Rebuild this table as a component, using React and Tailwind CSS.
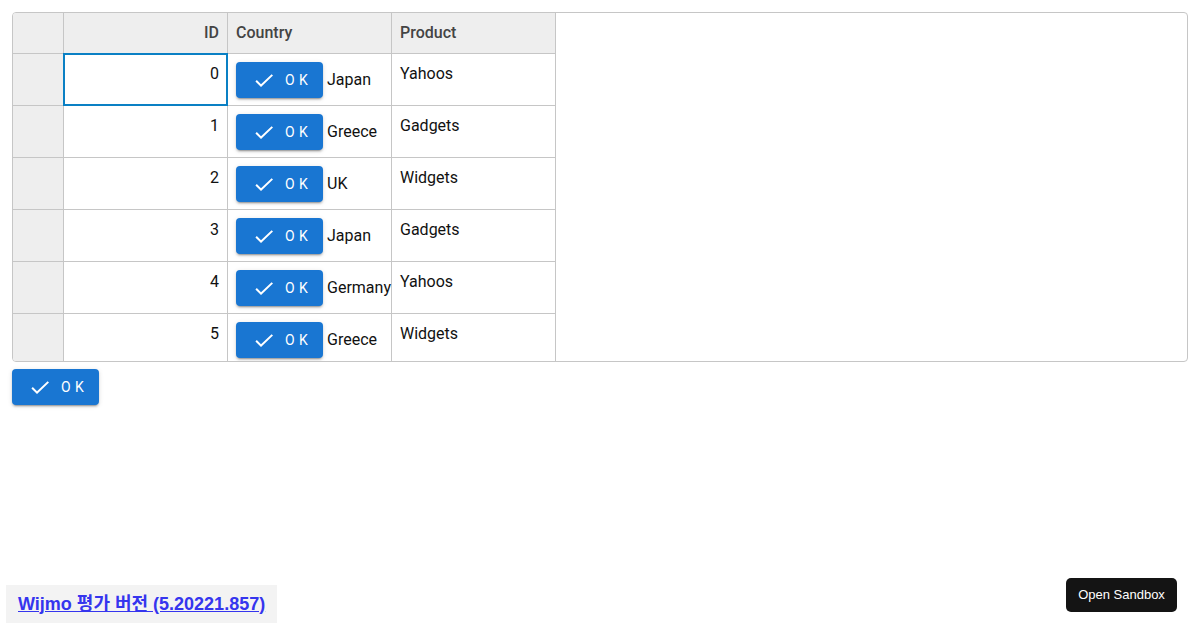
import React from "react";

const rows = [
  { id: 0, country: "Japan", product: "Yahoos" },
  { id: 1, country: "Greece", product: "Gadgets" },
  { id: 2, country: "UK", product: "Widgets" },
  { id: 3, country: "Japan", product: "Gadgets" },
  { id: 4, country: "Germany", product: "Yahoos" },
  { id: 5, country: "Greece", product: "Widgets" },
];

function OkButton() {
  return (
    <button className="flex h-[36px] w-[87px] shrink-0 items-center rounded-[4px] bg-[#1976d2] pl-[16px] text-white shadow-[0_3px_1px_-2px_rgba(0,0,0,0.2),0_2px_2px_0_rgba(0,0,0,0.14),0_1px_5px_0_rgba(0,0,0,0.12)]">
      <svg width="24" height="24" viewBox="0 0 24 24" fill="currentColor">
        <path d="M9 16.17 4.83 12l-1.42 1.41L9 19 21 7.59l-1.41-1.41z" />
      </svg>
      <span className="ml-[9px] text-[14px] font-normal tracking-[0.32em] leading-none">OK</span>
    </button>
  );
}

export default function App() {
  return (
    <div className="flex min-h-[630px] flex-col font-['Roboto',sans-serif]">
      {/* Grid */}
      <div className="mx-[12px] mt-[12px] h-[350px] w-[1176px] overflow-hidden rounded-[4px] border border-[#c6c6c6] text-[16px]">
        <div className="w-[543px]">
          <div className="flex h-[41px] border-b border-[#c6c6c6] bg-[#eeeeee] text-[#444] font-medium">
            <div className="w-[51px] border-r border-[#c6c6c6]" />
            <div className="flex w-[164px] items-center justify-end border-r border-[#c6c6c6] pr-[8px]">ID</div>
            <div className="flex w-[164px] items-center border-r border-[#c6c6c6] pl-[8px]">Country</div>
            <div className="flex w-[164px] items-center border-r border-[#c6c6c6] pl-[8px]">Product</div>
          </div>
          {rows.map((r, i) => (
            <div key={r.id} className="flex h-[52px] shrink-0 border-b border-[#c6c6c6] text-[#111]">
              <div className="w-[51px] border-r border-[#c6c6c6] bg-[#eeeeee]" />
              <div className="relative w-[164px] border-r border-[#c6c6c6] pr-[8px] pt-[8px] text-right">
                {r.id}
                {i === 0 && (
                  <div className="absolute -top-[1px] -left-[1px] -right-[1px] -bottom-[1px] border-2 border-[#0a80c4]" />
                )}
              </div>
              <div className="flex w-[164px] items-start border-r border-[#c6c6c6] pl-[8px] pt-[8px]">
                <OkButton />
                <span className="ml-[4px] mt-[6px] whitespace-nowrap">{r.country}</span>
              </div>
              <div className="w-[164px] border-r border-[#c6c6c6] pl-[8px] pt-[8px]">{r.product}</div>
            </div>
          ))}
        </div>
      </div>

      <div className="ml-[12px] mt-[7px]">
        <OkButton />
      </div>

      {/* Footer */}
      <div className="mt-auto mb-[7px] flex items-end justify-between">
        <div className="ml-[6px] flex h-[38px] items-center bg-[#f3f3f3] px-[12px]">
          <a href="#" className="font-['Liberation_Sans','Noto_Sans_CJK_KR',sans-serif] text-[18px] font-bold text-[#3535ee] underline">
            Wijmo 평가 버전 (5.20221.857)
          </a>
        </div>
        <button className="mr-[23px] mb-[11px] h-[34px] w-[111px] rounded-[5px] bg-[#141414] font-['Liberation_Sans',sans-serif] text-[13px] text-white">
          Open Sandbox
        </button>
      </div>
    </div>
  );
}
